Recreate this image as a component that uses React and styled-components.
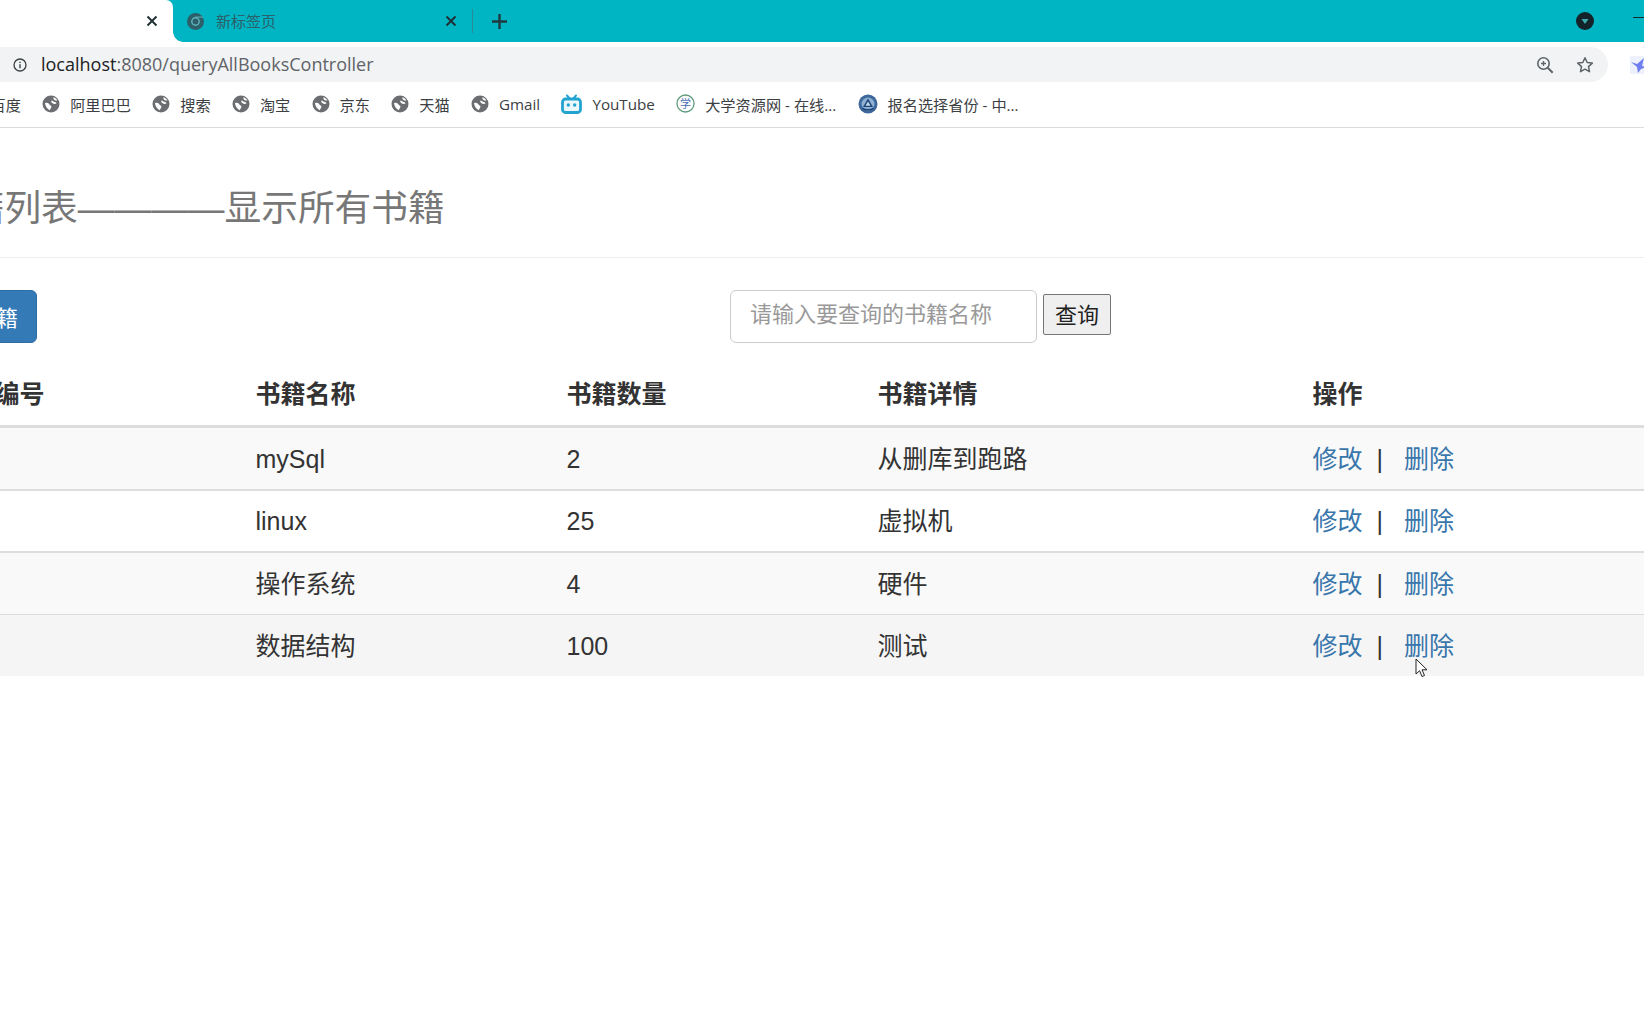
import React from 'react';
import styled, { createGlobalStyle } from 'styled-components';

const GlobalStyle = createGlobalStyle`
  html, body {
    margin: 0;
    padding: 0;
    background: #fff;
    overflow: hidden;
  }
  body {
    font-family: "Liberation Sans", "Noto Sans CJK SC", sans-serif;
  }
`;

const uiFont = `"Open Sans", "Noto Sans CJK SC", sans-serif`;

const Screen = styled.div`
  position: relative;
  width: 1644px;
  height: 1028px;
  overflow: hidden;
  background: #fff;
`;

const TabBar = styled.div`
  display: flex;
  align-items: center;
  height: 42px;
  background: #00b5c3;
`;

const ActiveTab = styled.div`
  position: relative;
  display: flex;
  align-items: center;
  justify-content: flex-end;
  flex: none;
  box-sizing: border-box;
  width: 173px;
  height: 42px;
  padding-right: 15px;
  background: #fff;
  border-top-right-radius: 7px;

  &::after {
    content: '';
    position: absolute;
    left: 100%;
    bottom: 0;
    width: 10px;
    height: 10px;
    background: radial-gradient(circle at 100% 0, transparent 9.5px, #fff 10px);
  }
`;

const Tab = styled.div`
  display: flex;
  align-items: center;
  flex: none;
  box-sizing: border-box;
  width: 299px;
  height: 42px;
  padding: 0 15px 0 14px;
  gap: 12px;
`;

const TabTitle = styled.span`
  flex: 1;
  padding-bottom: 2px;
  font: 15px ${uiFont};
  color: #2b5f69;
`;

const TabDivider = styled.div`
  flex: none;
  width: 1px;
  height: 24px;
  background: #2a8a96;
`;

const NewTab = styled.svg`
  flex: none;
  margin-left: 18px;
`;

const ProfileDot = styled.svg`
  flex: none;
  margin-left: auto;
  margin-right: 50px;
`;

const MinimizeBar = styled.div`
  position: absolute;
  top: 17px;
  right: 0;
  width: 11px;
  height: 1px;
  background: #1b2a2e;
`;

const AddressRow = styled.div`
  display: flex;
  align-items: center;
  box-sizing: border-box;
  height: 42px;
  padding-top: 5px;
  padding-bottom: 2px;
`;

const Omnibox = styled.div`
  display: flex;
  align-items: center;
  flex: none;
  box-sizing: border-box;
  width: 1628px;
  height: 35px;
  margin-left: -20px;
  padding: 0 14px 0 33px;
  background: #f1f3f4;
  border-radius: 18px;
`;

const Url = styled.div`
  flex: 1;
  margin-left: 14px;
  padding-bottom: 2px;
  font: 18px ${uiFont};
  color: #5f6368;
`;

const UrlHost = styled.span`
  color: #202124;
`;

const OmniIcons = styled.div`
  display: flex;
  align-items: center;
  gap: 22px;
`;

const ExtensionIcon = styled.svg`
  flex: none;
  margin-left: 22px;
`;

const BookmarkBar = styled.div`
  display: flex;
  align-items: center;
  gap: 21.3px;
  box-sizing: border-box;
  height: 44px;
  margin-left: -9.5px;
  padding-bottom: 4px;
  border-bottom: 1px solid #dadce0;
`;

const Bookmark = styled.div`
  display: flex;
  align-items: center;
  flex: none;
  gap: 10px;
  font: 15.2px ${uiFont};
  color: #3c4043;
  white-space: nowrap;
`;

const Content = styled.div`
  width: 1780px;
  margin-left: -68px;
`;

const PageHeader = styled.div`
  padding: 61px 0 28px;
  border-bottom: 1px solid #eee;
`;

const Title = styled.h1`
  margin: 0 0 0 -1px;
  font-size: 36.7px;
  font-weight: 400;
  line-height: 40px;
  color: #777;
`;

const Toolbar = styled.div`
  display: flex;
  align-items: center;
  height: 54px;
  margin-top: 31px;
`;

const PrimaryButton = styled.button`
  flex: none;
  box-sizing: border-box;
  width: 126px;
  height: 53px;
  margin-left: -21px;
  padding: 0;
  font: inherit;
  font-size: 22px;
  color: #fff;
  background: #337ab7;
  border: 1px solid #2e6da4;
  border-radius: 6px;
`;

const SearchInput = styled.input`
  flex: none;
  box-sizing: border-box;
  width: 307px;
  height: 53px;
  margin-left: 693px;
  padding: 0 19px 2px;
  font: inherit;
  font-size: 22px;
  color: #555;
  background: #fff;
  border: 1.5px solid #ccc;
  border-radius: 6px;

  &::placeholder {
    color: #999;
    opacity: 1;
  }
`;

const SearchButton = styled.button`
  flex: none;
  box-sizing: border-box;
  width: 68px;
  height: 41px;
  margin: 0 0 3px 6px;
  padding: 0 0 4px;
  font: inherit;
  font-size: 22px;
  color: #222;
  background: #efefef;
  border: 1px solid #767676;
  border-radius: 2px;
`;

const BookTable = styled.table`
  width: 1712px;
  margin: 20px 0 0 1.5px;
  table-layout: fixed;
  border-collapse: separate;
  border-spacing: 0;
  font-size: 25px;
  line-height: 36px;
  color: #333;
`;

const Th = styled.th`
  box-sizing: border-box;
  width: ${p => p.$w}px;
  height: 65px;
  padding: 0 11px;
  font-weight: 700;
  text-align: left;
  border-bottom: 3px solid #ddd;
`;

const Row = styled.tr`
  background: ${p => p.$bg};
`;

const Td = styled.td`
  box-sizing: border-box;
  height: ${p => p.$h}px;
  padding: 0 11px;
  border-bottom: ${p => (p.$line ? `${p.$line}px solid #ddd` : 'none')};
`;

const ActionLink = styled.a`
  color: #3876ab;
  text-decoration: none;
`;

const ActionSep = styled.span`
  margin: 0 21px 0 14px;
`;

const Cursor = styled.svg`
  position: absolute;
  left: 1415px;
  top: 658px;
`;

const GlobeIcon = () => (
  <svg width="18" height="18" viewBox="0 0 18 18">
    <circle cx="9" cy="9" r="8.5" fill="#6b6d70" />
    <path d="M11.5 2.2c1.6.6 3 1.7 3.9 3.1-1.2.5-2 .2-2.8-.4-.9-.6-1.6-1.6-1.1-2.7z" fill="#fff" />
    <path d="M3 8.2c1.2-.6 2.6-.5 3.6.2 1 .7 1 1.7 2 2.2.8.4 1 1.2.6 2-.4.9-.8 1.8-1.6 2.6C5.500 14 3.300 11.500 3 8.200z" fill="#fff" />
    <path d="M9.500 5.500c1.300.2 2.300 1.300 3.300 1.500 1 .2 1.700.7 1.600 1.600-1.500.6-3.100.2-4.200-.6-.8-.6-1.200-1.500-.7-2.500z" fill="#fff" />
  </svg>
);

const BiliIcon = () => (
  <svg width="21" height="20" viewBox="0 0 21 20">
    <path d="M6 1.500l2.500 3M15 1.500l-2.500 3" stroke="#23a3cf" strokeWidth="2" strokeLinecap="round" />
    <rect x="1.500" y="5" width="18" height="13.500" rx="3" fill="#eaf7fb" stroke="#23a3cf" strokeWidth="2.800" />
    <circle cx="7.300" cy="11" r="1.700" fill="#23a3cf" />
    <circle cx="13.700" cy="11" r="1.700" fill="#23a3cf" />
  </svg>
);

const StudyIcon = () => (
  <svg width="19" height="19" viewBox="0 0 19 19">
    <circle cx="9.500" cy="9.500" r="8.500" fill="#fff" stroke="#5f9a7c" strokeWidth="1.300" />
    <text x="9.500" y="13.500" textAnchor="middle" fontSize="11" fill="#4a6fb5" fontFamily="Noto Sans CJK SC">学</text>
  </svg>
);

const EmblemIcon = () => (
  <svg width="20" height="20" viewBox="0 0 20 20">
    <circle cx="10" cy="10" r="9.500" fill="#3d689c" />
    <circle cx="10" cy="10" r="6.500" fill="#8fb0d3" />
    <path d="M10 4.500L15 13H5z" fill="#1f4678" />
    <path d="M10 7.500L12.500 11.800H7.500z" fill="#c3d6ea" />
    <path d="M4.500 14.500c3 1.800 8 1.800 11 0" stroke="#1f4678" strokeWidth="1.500" fill="none" />
  </svg>
);

const bookmarks = [
  { label: '阿里巴巴', icon: <GlobeIcon /> },
  { label: '搜索', icon: <GlobeIcon /> },
  { label: '淘宝', icon: <GlobeIcon /> },
  { label: '京东', icon: <GlobeIcon /> },
  { label: '天猫', icon: <GlobeIcon /> },
  { label: 'Gmail', icon: <GlobeIcon /> },
  { label: 'YouTube', icon: <BiliIcon /> },
  { label: '大学资源网 - 在线...', icon: <StudyIcon /> },
  { label: '报名选择省份 - 中...', icon: <EmblemIcon /> },
];

const books = [
  { name: 'mySql', count: 2, detail: '从删库到跑路', bg: '#f9f9f9', line: 2, h: 63 },
  { name: 'linux', count: 25, detail: '虚拟机', bg: '#fff', line: 2, h: 62 },
  { name: '操作系统', count: 4, detail: '硬件', bg: '#f9f9f9', line: 1, h: 62 },
  { name: '数据结构', count: 100, detail: '测试', bg: '#f5f5f5', line: 0, h: 61 },
];

const columns = [
  { label: '书籍编号', w: 311 },
  { label: '书籍名称', w: 311 },
  { label: '书籍数量', w: 311 },
  { label: '书籍详情', w: 435 },
  { label: '操作', w: 344 },
];

const CloseIcon = () => (
  <svg width="12" height="12" viewBox="0 0 12 12">
    <path d="M1.500 1.500l9 9M10.500 1.500l-9 9" stroke="#1f2f33" strokeWidth="1.900" />
  </svg>
);

export default function App() {
  return (
    <Screen>
      <GlobalStyle />
      <TabBar>
        <ActiveTab>
          <CloseIcon />
        </ActiveTab>
        <Tab>
          <svg width="17" height="17" viewBox="0 0 17 17">
            <circle cx="8.500" cy="8.500" r="8.500" fill="#2c5f69" />
            <circle cx="8.500" cy="8.500" r="4.400" fill="#5fb4bd" />
            <circle cx="8.500" cy="8.500" r="3" fill="#2c5f69" />
            <path d="M8.500 4.100h7.600" stroke="#5fb4bd" strokeWidth="1" />
          </svg>
          <TabTitle>新标签页</TabTitle>
          <CloseIcon />
        </Tab>
        <TabDivider />
        <NewTab width="17" height="17" viewBox="0 0 17 17">
          <path d="M8.500 1v15M1 8.500h15" stroke="#1f3a40" strokeWidth="2.400" />
        </NewTab>
        <ProfileDot width="18" height="18" viewBox="0 0 18 18">
          <circle cx="9" cy="9" r="9" fill="#14232a" />
          <path d="M5.500 7h7L9 12z" fill="#3fa9b0" />
        </ProfileDot>
        <MinimizeBar />
      </TabBar>

      <AddressRow>
        <Omnibox>
          <svg width="14" height="14" viewBox="0 0 14 14">
            <circle cx="7" cy="7" r="6" fill="none" stroke="#3c4043" strokeWidth="1.300" />
            <path d="M7 6.200v4M7 3.800v1.300" stroke="#3c4043" strokeWidth="1.400" />
          </svg>
          <Url>
            <UrlHost>localhost</UrlHost>:8080/queryAllBooksController
          </Url>
          <OmniIcons>
            <svg width="18" height="18" viewBox="0 0 18 18">
              <circle cx="7.500" cy="7.500" r="5.700" fill="none" stroke="#5f6368" strokeWidth="1.600" />
              <path d="M11.700 11.700l5 5" stroke="#5f6368" strokeWidth="2" />
              <path d="M7.500 5v5M5 7.500h5" stroke="#5f6368" strokeWidth="1.300" />
            </svg>
            <svg width="18" height="18" viewBox="0 0 18 18">
              <path
                d="M9 1.800l2.200 4.700 5.100.6-3.800 3.500 1 5.100L9 13.200l-4.500 2.500 1-5.100-3.800-3.500 5.100-.6z"
                fill="none"
                stroke="#5f6368"
                strokeWidth="1.500"
                strokeLinejoin="round"
              />
            </svg>
          </OmniIcons>
        </Omnibox>
        <ExtensionIcon width="18" height="18" viewBox="0 0 18 18">
          <rect width="18" height="18" fill="#eef0fb" />
          <path d="M1 6l6 2 7-6-2 8 5 1-6 2-3 4-1-6z" fill="#6f7ff0" />
        </ExtensionIcon>
      </AddressRow>

      <BookmarkBar>
        <Bookmark>百度</Bookmark>
        {bookmarks.map(item => (
          <Bookmark key={item.label}>
            {item.icon}
            {item.label}
          </Bookmark>
        ))}
      </BookmarkBar>

      <Content>
        <PageHeader>
          <Title>书籍列表————显示所有书籍</Title>
        </PageHeader>
        <Toolbar>
          <PrimaryButton>新增书籍</PrimaryButton>
          <SearchInput placeholder="请输入要查询的书籍名称" />
          <SearchButton>查询</SearchButton>
        </Toolbar>
        <BookTable>
          <thead>
            <tr>
              {columns.map(col => (
                <Th key={col.label} $w={col.w}>
                  {col.label}
                </Th>
              ))}
            </tr>
          </thead>
          <tbody>
            {books.map((book, i) => (
              <Row key={book.name} $bg={book.bg}>
                <Td $line={book.line} $h={book.h}>{i + 1}</Td>
                <Td $line={book.line} $h={book.h}>{book.name}</Td>
                <Td $line={book.line} $h={book.h}>{book.count}</Td>
                <Td $line={book.line} $h={book.h}>{book.detail}</Td>
                <Td $line={book.line} $h={book.h}>
                  <ActionLink href="#">修改</ActionLink>
                  <ActionSep>|</ActionSep>
                  <ActionLink href="#">删除</ActionLink>
                </Td>
              </Row>
            ))}
          </tbody>
        </BookTable>
      </Content>

      <Cursor width="14" height="20" viewBox="0 0 14 20">
        <path
          d="M1 1v15l3.600-3.300 2.400 5.800 2.500-1-2.500-5.700h5z"
          fill="#fff"
          stroke="#222"
          strokeWidth="1"
          strokeLinejoin="round"
        />
      </Cursor>
    </Screen>
  );
}
